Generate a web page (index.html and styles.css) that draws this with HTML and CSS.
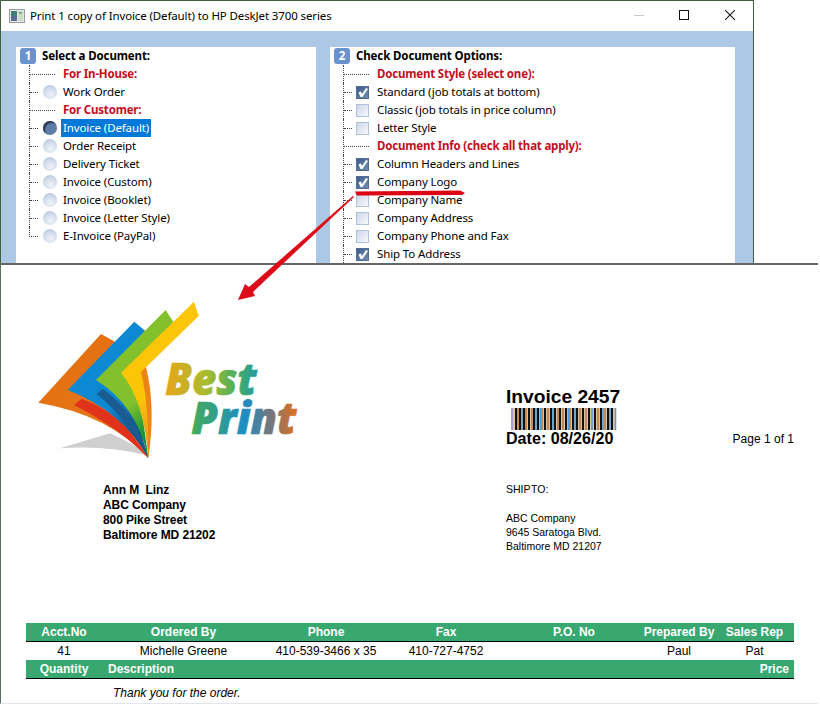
FILE: index.html
```html
<!DOCTYPE html>
<html>
<head>
<meta charset="utf-8" />
<title>Print Invoice</title>
<link rel="stylesheet" href="styles.css">
</head>
<body>
<div class="window">
  <div class="titlebar">
    <svg class="appicon" width="16" height="14" viewBox="0 0 16 14">
      <rect x="0.5" y="0.5" width="15" height="13" fill="#e6e6e6" stroke="#9a9a9a"/>
      <rect x="2" y="2" width="6" height="10" fill="#3f7f78"/>
      <rect x="2" y="7" width="6" height="5" fill="#5a6f8f"/>
      <rect x="9" y="2" width="5" height="10" fill="#c8dcc8"/>
      <rect x="10" y="3" width="3" height="2" fill="#7fb08a"/>
    </svg>
    <span class="title">Print 1 copy of Invoice (Default) to HP DeskJet 3700 series</span>
    <div class="controls">
      <svg width="10" height="10" viewBox="0 0 10 10"><path d="M0 5.5H10" stroke="#c8c8c8"/></svg>
      <svg width="10" height="10" viewBox="0 0 10 10"><rect x="0.5" y="0.5" width="9" height="9" fill="none" stroke="#111"/></svg>
      <svg width="10" height="10" viewBox="0 0 10 10"><path d="M0 0L10 10M10 0L0 10" stroke="#111" stroke-width="1.05"/></svg>
    </div>
  </div>
  <div class="panels">
    <div class="panel panel-left">
      <div class="panel-head"><span class="step">1</span>Select a Document:</div>
      <ul class="tree">
        <li class="group"><span class="twig"></span><span class="label">For In-House:</span></li>
        <li><span class="twig"></span><span class="radio"></span><span class="label">Work Order</span></li>
        <li class="group"><span class="twig"></span><span class="label">For Customer:</span></li>
        <li><span class="twig"></span><span class="radio on"></span><span class="label selected">Invoice (Default)</span></li>
        <li><span class="twig"></span><span class="radio"></span><span class="label">Order Receipt</span></li>
        <li><span class="twig"></span><span class="radio"></span><span class="label">Delivery Ticket</span></li>
        <li><span class="twig"></span><span class="radio"></span><span class="label">Invoice (Custom)</span></li>
        <li><span class="twig"></span><span class="radio"></span><span class="label">Invoice (Booklet)</span></li>
        <li><span class="twig"></span><span class="radio"></span><span class="label">Invoice (Letter Style)</span></li>
        <li class="last"><span class="twig"></span><span class="radio"></span><span class="label">E-Invoice (PayPal)</span></li>
      </ul>
    </div>
    <div class="panel panel-right">
      <div class="panel-head"><span class="step">2</span>Check Document Options:</div>
      <ul class="tree">
        <li class="group"><span class="twig"></span><span class="label">Document Style (select one):</span></li>
        <li><span class="twig"></span><span class="check on"><svg width="13" height="13" viewBox="0 0 13 13"><path d="M2.500 6.500L5 5.500L6 8L10 2L12 3L6.500 11H4.500Z" fill="#fff"/></svg></span><span class="label">Standard (job totals at bottom)</span></li>
        <li><span class="twig"></span><span class="check"></span><span class="label">Classic (job totals in price column)</span></li>
        <li><span class="twig"></span><span class="check"></span><span class="label">Letter Style</span></li>
        <li class="group"><span class="twig"></span><span class="label">Document Info (check all that apply):</span></li>
        <li><span class="twig"></span><span class="check on"><svg width="13" height="13" viewBox="0 0 13 13"><path d="M2.500 6.500L5 5.500L6 8L10 2L12 3L6.500 11H4.500Z" fill="#fff"/></svg></span><span class="label">Column Headers and Lines</span></li>
        <li><span class="twig"></span><span class="check on"><svg width="13" height="13" viewBox="0 0 13 13"><path d="M2.500 6.500L5 5.500L6 8L10 2L12 3L6.500 11H4.500Z" fill="#fff"/></svg></span><span class="label">Company Logo</span></li>
        <li><span class="twig"></span><span class="check"></span><span class="label">Company Name</span></li>
        <li><span class="twig"></span><span class="check"></span><span class="label">Company Address</span></li>
        <li><span class="twig"></span><span class="check"></span><span class="label">Company Phone and Fax</span></li>
        <li><span class="twig"></span><span class="check on"><svg width="13" height="13" viewBox="0 0 13 13"><path d="M2.500 6.500L5 5.500L6 8L10 2L12 3L6.500 11H4.500Z" fill="#fff"/></svg></span><span class="label">Ship To Address</span></li>
      </ul>
    </div>
  </div>
</div>

<div class="report">
  <div class="report-head">
    <div class="head-left">
      <svg class="logo" width="290" height="180" viewBox="0 0 870 540">
        <defs>
          <linearGradient id="gOrange" x1="0" y1="0" x2="0.6" y2="1"><stop offset="0" stop-color="#e2700f"/><stop offset="1" stop-color="#e8751a"/></linearGradient>
          <linearGradient id="gBlue" x1="0.3" y1="0.2" x2="0.8" y2="1"><stop offset="0.5" stop-color="#0d88d2"/><stop offset="0.8" stop-color="#14568f"/><stop offset="1" stop-color="#17406b"/></linearGradient>
          <linearGradient id="gGreen" x1="0.4" y1="0.2" x2="0.7" y2="1"><stop offset="0.5" stop-color="#82c02c"/><stop offset="0.75" stop-color="#1d9a3a"/><stop offset="1" stop-color="#0c7f3c"/></linearGradient>
          <linearGradient id="gYellow" x1="0.4" y1="0.2" x2="0.6" y2="1"><stop offset="0.45" stop-color="#fdc508"/><stop offset="0.7" stop-color="#f0a512"/><stop offset="1" stop-color="#ea8a16"/></linearGradient>
          <linearGradient id="gBest" x1="0" y1="0" x2="1" y2="0"><stop offset="0" stop-color="#e7a51a"/><stop offset="0.45" stop-color="#a8bc2e"/><stop offset="0.75" stop-color="#4fb05c"/><stop offset="1" stop-color="#1f9aa0"/></linearGradient>
          <linearGradient id="gPrint" x1="0" y1="0" x2="1" y2="0"><stop offset="0" stop-color="#45ab5a"/><stop offset="0.5" stop-color="#1c8ec4"/><stop offset="0.75" stop-color="#76767a"/><stop offset="1" stop-color="#e8701a"/></linearGradient>
        </defs>
        <path d="M120 475L270 430Q340 460 385 497Q260 465 120 475Z" fill="#cfcfcf"/>
        <path d="M55 338L243 132L285 155L260 320L385 505Q270 375 55 338Z" fill="url(#gOrange)"/>
        <path d="M162 345L185 326Q310 370 385 505Q300 415 162 345Z" fill="#e1321c"/>
        <path d="M143 300L343 95L375 122L320 280L385 505Q310 365 143 300Z" fill="url(#gBlue)"/>
        <path d="M230 312L248 296Q345 365 385 500Q325 390 230 312Z" fill="#1a5c92"/>
        <path d="M228 270L437 60L460 95L350 250L385 505Q350 345 228 270Z" fill="url(#gGreen)"/>
        <path d="M303 248L522 35L536 78L378 232Q402 350 385 505Q372 330 303 248Z" fill="url(#gYellow)"/>
        <path d="M363 246L378 232Q408 350 385 505Q388 350 363 246Z" fill="#ec8418"/>
        <text class="logo-text" x="436" y="315" textLength="274" lengthAdjust="spacingAndGlyphs" fill="url(#gBest)" stroke="url(#gBest)">Best</text>
        <text class="logo-text" x="514" y="432" textLength="316" lengthAdjust="spacingAndGlyphs" fill="url(#gPrint)" stroke="url(#gPrint)">Print</text>
      </svg>
      <div class="bill-to">Ann M&nbsp; Linz<br />ABC Company<br />800 Pike Street<br />Baltimore MD 21202</div>
    </div>
    <div class="head-right">
      <div class="invoice-no">Invoice 2457</div>
      <svg class="barcode" width="106" height="22" viewBox="0 0 106 22">
        <rect x="2" width="103" height="22" fill="#d9c3a4"/>
        <path d="M5 0V22M9 0V22M13 0V22M18 0V22M23 0V22M27 0V22M34 0V22M40 0V22M44 0V22M49 0V22M55 0V22M62 0V22M66 0V22M72 0V22M78 0V22M84 0V22M90 0V22M97 0V22M101 0V22" stroke="#111" stroke-width="2"/>
        <path d="M1 0V22" stroke="#5a3f94"/>
        <path d="M7 0V22M15 0V22M21 0V22M31 0V22M37 0V22M47 0V22M52 0V22M59 0V22M69 0V22M75 0V22M87 0V22M94 0V22" stroke="#b9783c" stroke-width="1.500"/>
        <path d="M11 0V22M25 0V22M29.500 0V22M42 0V22M57.500 0V22M64 0V22M81 0V22M92 0V22M99 0V22M104.500 0V22" stroke="#4f9ad8" stroke-width="1.500"/>
      </svg>
      <div class="date-row"><span class="date">Date: 08/26/20</span><span class="page-no">Page 1 of 1</span></div>
      <div class="ship-to"><span class="ship-head">SHIP TO:</span><br /><br />ABC Company<br />9645 Saratoga Blvd.<br />Baltimore MD 21207</div>
    </div>
  </div>

  <div class="sheet">
    <div class="row green">
      <span>Acct.No</span><span>Ordered By</span><span>Phone</span><span>Fax</span><span>P.O. No</span><span>Prepared By</span><span>Sales Rep</span>
    </div>
    <div class="row">
      <span>41</span><span>Michelle Greene</span><span>410-539-3466 x 35</span><span>410-727-4752</span><span></span><span>Paul</span><span>Pat</span>
    </div>
    <div class="row-lines green">
      <span class="col-qty">Quantity</span><span class="col-desc">Description</span><span class="col-price">Price</span>
    </div>
  </div>
  <div class="thanks">Thank you for the order.</div>
</div>

<svg class="markup" width="820" height="704" viewBox="0 0 820 704">
  <path d="M355 191.500L460 190.500L465 193L462 195L357 195.500Z" fill="#dc0012"/>
  <path d="M353 196L249 287L245 284L238 300L255 296L253 292L354 197Z" fill="#dc0c1a"/>
</svg>
</body>
</html>
```

FILE: styles.css
```css
*{box-sizing:border-box;}
html,body{margin:0;padding:0;}
body{width:820px;height:704px;overflow:hidden;position:relative;background:#fff;color:#000;font-family:"Noto Sans",sans-serif;font-size:11.500px;letter-spacing:-0.120px;}
ul{list-style:none;margin:0;padding:0;}

.window {width:754px;height:263px;overflow:hidden;border:#3f5f41 1px solid;border-bottom:none;background:#adc8e4;}
.titlebar {height:30px;background:#fff;display:flex;align-items:center;padding:0 0 1px 8px;}
.appicon {margin-right:5px;}
.title {white-space:nowrap;}
.controls {margin-left:auto;display:flex;gap:35px;padding:0 18px 1px 0;}
.controls svg:last-child {margin-left:1px;}

.panels {display:flex;gap:14px;padding:16px 0 0 15px;height:232px;}
.panel {background:#fff;height:100%;}
.panel-left {width:300px;}
.panel-right {width:405px;}
.panel-head {display:flex;height:18px;padding:1px 0 0 4px;font-weight:bold;line-height:16px;}
.step {width:16px;height:16px;margin-right:6px;border-radius:3px;background:#6a92ce;color:#fff;text-align:center;line-height:16px;}

.tree {margin-left:13px;}
.tree li {display:flex;align-items:center;height:18px;border-left:#444 1px dotted;white-space:nowrap;}
.twig {align-self:flex-start;width:8px;height:10px;border-bottom:#444 1px dotted;}
.tree li.last {border-left:none;}
.tree li.last .twig {width:9px;border-left:#444 1px dotted;}
.tree .group .twig {width:25px;}
.group .label {margin-left:6px;color:#c40d1e;font-weight:bold;letter-spacing:-0.200px;}
.label {margin-left:4px;padding:0 2px;line-height:18px;}
.label.selected {background:#0078d7;color:#fff;}

.radio {width:14px;height:14px;margin-left:5px;border-radius:50%;background:radial-gradient(circle at 55% 70%,#f0f3f9 0,#cfdaeb 55%,#a8bad6 100%);}
.radio.on {background:#5e7daa;box-shadow:inset 2px 2px 1px #2f3c50;}
.check {width:13px;height:13px;margin-left:4px;margin-right:2px;border:#afc2dc 1px solid;background:linear-gradient(135deg,#cdd7ea 0,#f7f9fc 100%);}
.check.on {border-color:#4f6d98;background:linear-gradient(135deg,#3f5f8c 0,#6d8ab3 100%);}
.check svg {display:block;margin:-1px;}

.report {width:818px;height:441px;border-top:#666 2px solid;border-left:#56705a 1px solid;border-bottom:#e1e6ee 1px solid;background:#fff;font-family:"Liberation Sans",Arial,sans-serif;font-size:12px;letter-spacing:0;}
.report-head {display:flex;height:358px;}
.head-left {width:505px;padding:25px 0 0 19px;}
.logo {display:block;}
.logo-text {font-family:"Open Sans",sans-serif;font-size:132px;font-weight:800;font-style:italic;stroke-width:2;}
.bill-to {margin:13px 0 0 83px;font-size:12px;font-weight:bold;line-height:15px;letter-spacing:-0.100px;}
.head-right {width:288px;padding-top:121px;}
.invoice-no {font-size:19.200px;font-weight:bold;line-height:22px;white-space:nowrap;}
.barcode {display:block;margin-left:5px;}
.date-row {display:flex;justify-content:space-between;align-items:center;height:17px;}
.date {font-size:16.100px;font-weight:bold;}
.page-no {font-size:12px;}
.ship-to {margin-top:35px;font-size:10.500px;line-height:14.300px;}
.ship-head {word-spacing:-2px;}

.sheet {margin-left:25px;width:768px;font-size:12px;}
.row {display:grid;grid-template-columns:76px 163px 122px 118px 138px 72px 79px;height:18px;line-height:18px;text-align:center;white-space:nowrap;}
.row span {justify-self:center;}
.green {background:#38a870;color:#fff;font-weight:bold;border-bottom:#000 1px solid;height:19px;}
.row-lines {display:flex;height:19px;line-height:18px;white-space:nowrap;}
.col-qty {width:76px;text-align:center;}
.col-desc {margin-left:6px;}
.col-price {margin-left:auto;padding-right:5px;}
.thanks {margin:7px 0 0 112px;font-size:12px;font-style:italic;line-height:14px;}

.markup {position:absolute;left:0;top:0;pointer-events:none;}
```
